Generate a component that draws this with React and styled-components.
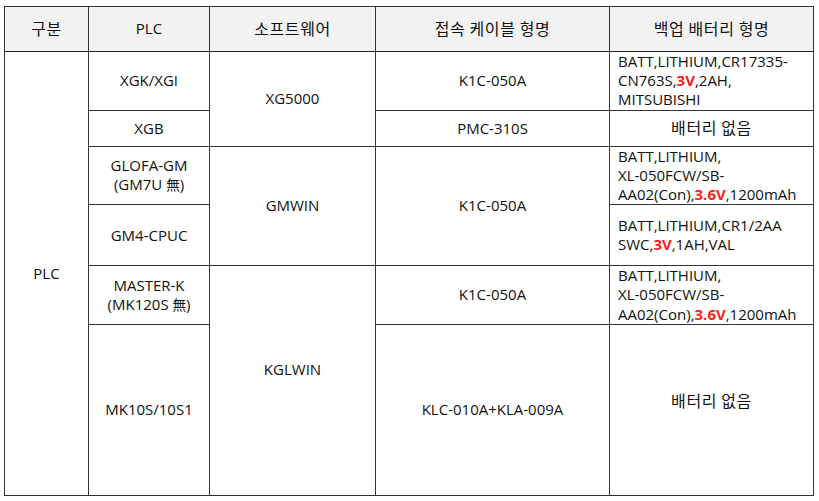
import React from "react";
import styled, { createGlobalStyle } from "styled-components";

const GlobalStyle = createGlobalStyle`
  html, body {
    margin: 0;
    padding: 0;
    background: #ffffff;
  }
  body {
    font-family: "Open Sans", "Noto Sans CJK KR", sans-serif;
    color: #111111;
  }
`;

const Page = styled.div`
  width: 819px;
  height: 501px;
  padding: 6px 0 0 4px;
  box-sizing: border-box;
`;

const Table = styled.table`
  border-collapse: collapse;
  table-layout: fixed;
  width: 809px;
  font-size: 15px;
  line-height: 19.2px;
  border: 1.5px solid #222;
`;

const Head = styled.th`
  height: 44px;
  background: #f2f2f2;
  font-weight: 400;
  text-align: center;
  vertical-align: middle;
  border: 1px solid #333;
  border-bottom: 1.5px solid #222;
  padding: 0;
`;

const Cell = styled.td`
  height: ${(p) => p.$h || "auto"};
  border: 1px solid #333;
  text-align: ${(p) => (p.$left ? "left" : "center")};
  vertical-align: middle;
  padding: ${(p) => (p.$left ? "0 2px 0 8px" : "0 4px")};
  padding-bottom: ${(p) => p.$pb || "0"};
  white-space: nowrap;
`;

const Red = styled.b`
  color: #ff1a1a;
  font-weight: 700;
`;

const Korean = styled.span`
  font-family: "Noto Sans CJK KR", sans-serif;
  font-size: 16px;
  letter-spacing: 0.6px;
`;

const Han = styled.span`
  font-family: "Noto Sans CJK KR", sans-serif;
  font-size: 13.5px;
`;

export default function App() {
  return (
    <Page>
      <GlobalStyle />
      <Table>
        <colgroup>
          <col style={{ width: 84 }} />
          <col style={{ width: 121 }} />
          <col style={{ width: 166 }} />
          <col style={{ width: 234 }} />
          <col style={{ width: 204 }} />
        </colgroup>
        <thead>
          <tr>
            <Head><Korean>구분</Korean></Head>
            <Head>PLC</Head>
            <Head><Korean>소프트웨어</Korean></Head>
            <Head><Korean>접속 케이블 형명</Korean></Head>
            <Head><Korean>백업 배터리 형명</Korean></Head>
          </tr>
        </thead>
        <tbody>
          <tr>
            <Cell rowSpan={7}>PLC</Cell>
            <Cell $h="56px">XGK/XGI</Cell>
            <Cell rowSpan={2}>XG5000</Cell>
            <Cell>K1C-050A</Cell>
            <Cell $left>
              BATT,LITHIUM,CR17335-
              <br />
              CN763S,<Red>3V</Red>,2AH,
              <br />
              MITSUBISHI
            </Cell>
          </tr>
          <tr>
            <Cell $h="35px">XGB</Cell>
            <Cell>PMC-310S</Cell>
            <Cell><Korean>배터리 없음</Korean></Cell>
          </tr>
          <tr>
            <Cell $h="56px">
              GLOFA-GM
              <br />
              (GM7U <Han>無</Han>)
            </Cell>
            <Cell rowSpan={2}>GMWIN</Cell>
            <Cell rowSpan={2}>K1C-050A</Cell>
            <Cell $left>
              BATT,LITHIUM,
              <br />
              XL-050FCW/SB-
              <br />
              AA02(Con),<Red>3.6V</Red>,1200mAh
            </Cell>
          </tr>
          <tr>
            <Cell $h="60px">GM4-CPUC</Cell>
            <Cell $left>
              BATT,LITHIUM,CR1/2AA
              <br />
              SWC,<Red>3V</Red>,1AH,VAL
            </Cell>
          </tr>
          <tr>
            <Cell $h="56px">
              MASTER-K
              <br />
              (MK120S <Han>無</Han>)
            </Cell>
            <Cell rowSpan={2} $pb="22px">KGLWIN</Cell>
            <Cell>K1C-050A</Cell>
            <Cell $left>
              BATT,LITHIUM,
              <br />
              XL-050FCW/SB-
              <br />
              AA02(Con),<Red>3.6V</Red>,1200mAh
            </Cell>
          </tr>
          <tr>
            <Cell $h="170px">MK10S/10S1</Cell>
            <Cell>KLC-010A+KLA-009A</Cell>
            <Cell $pb="18px"><Korean>배터리 없음</Korean></Cell>
          </tr>
        </tbody>
      </Table>
    </Page>
  );
}
